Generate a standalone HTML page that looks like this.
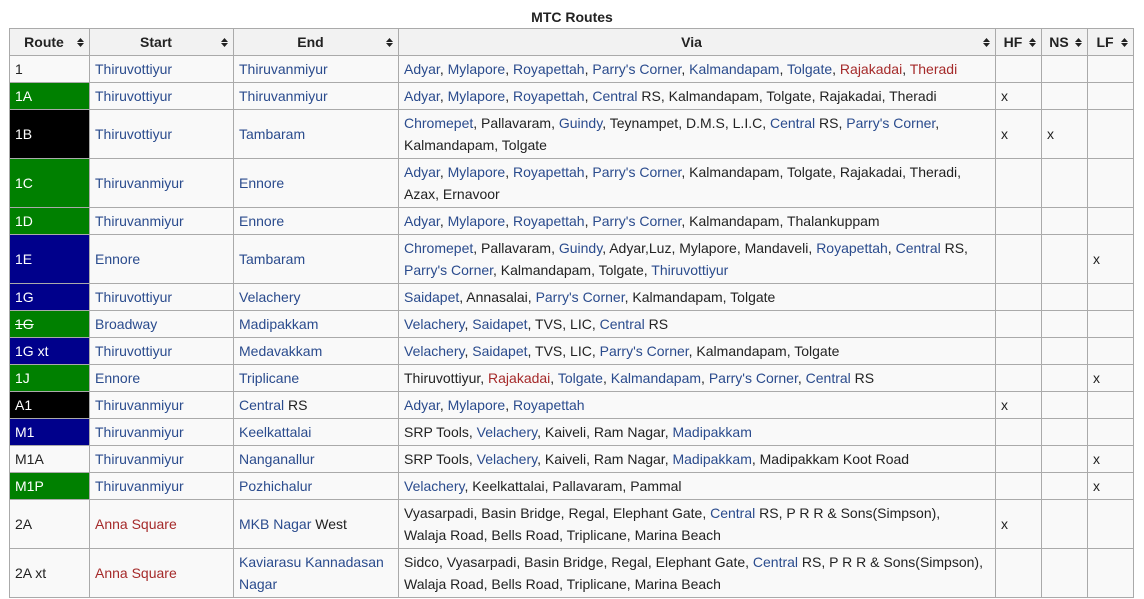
<!DOCTYPE html>
<html><head><meta charset="utf-8"><style>
body{margin:0;background:#fff;font-family:"Liberation Sans",Arial,sans-serif;font-size:14px;color:#222}
.cap{position:absolute;left:0;width:1144px;top:8px;text-align:center;font-weight:bold;font-size:14px;line-height:18px}
table{position:absolute;left:9px;top:28px;border-collapse:collapse;table-layout:fixed;width:1124px;background:#f9f9f9}
td,th{border:1px solid #aaa;padding:0 5px;line-height:22px;vertical-align:middle;overflow:hidden;white-space:nowrap}
th{background:#f2f2f2;height:26px;font-weight:bold;text-align:center;position:relative;padding-right:16px}
th i{position:absolute;right:5px;top:9px;width:7px;height:9px;display:block}
th i svg{display:block}
td{height:26px}
tr.d td{height:48px}
a{color:#2a4b8d;text-decoration:none}
.r{color:#a52a2a}
.g{background:#008000;color:#fff}.b{background:#000;color:#fff}.n{background:#00008b;color:#fff}
</style></head><body>
<div class="cap">MTC Routes</div>
<table>
<colgroup><col style="width:80px"><col style="width:144px"><col style="width:165px"><col style="width:597px"><col style="width:46px"><col style="width:46px"><col style="width:46px"></colgroup>
<tr><th>Route<i><svg width="7" height="9"><path d="M0 4L3.5 0L7 4ZM0 5L3.5 9L7 5Z" fill="#222"/></svg></i></th><th>Start<i><svg width="7" height="9"><path d="M0 4L3.5 0L7 4ZM0 5L3.5 9L7 5Z" fill="#222"/></svg></i></th><th>End<i><svg width="7" height="9"><path d="M0 4L3.5 0L7 4ZM0 5L3.5 9L7 5Z" fill="#222"/></svg></i></th><th>Via<i><svg width="7" height="9"><path d="M0 4L3.5 0L7 4ZM0 5L3.5 9L7 5Z" fill="#222"/></svg></i></th><th>HF<i><svg width="7" height="9"><path d="M0 4L3.5 0L7 4ZM0 5L3.5 9L7 5Z" fill="#222"/></svg></i></th><th>NS<i><svg width="7" height="9"><path d="M0 4L3.5 0L7 4ZM0 5L3.5 9L7 5Z" fill="#222"/></svg></i></th><th>LF<i><svg width="7" height="9"><path d="M0 4L3.5 0L7 4ZM0 5L3.5 9L7 5Z" fill="#222"/></svg></i></th></tr>
<tr><td>1</td><td><a>Thiruvottiyur</a></td><td><a>Thiruvanmiyur</a></td><td><a>Adyar</a>, <a>Mylapore</a>, <a>Royapettah</a>, <a>Parry's Corner</a>, <a>Kalmandapam</a>, <a>Tolgate</a>, <span class="r">Rajakadai</span>, <span class="r">Theradi</span></td><td></td><td></td><td></td></tr>
<tr><td class="g">1A</td><td><a>Thiruvottiyur</a></td><td><a>Thiruvanmiyur</a></td><td><a>Adyar</a>, <a>Mylapore</a>, <a>Royapettah</a>, <a>Central</a> RS, Kalmandapam, Tolgate, Rajakadai, Theradi</td><td>x</td><td></td><td></td></tr>
<tr class="d"><td class="b">1B</td><td><a>Thiruvottiyur</a></td><td><a>Tambaram</a></td><td><a>Chromepet</a>, Pallavaram, <a>Guindy</a>, Teynampet, D.M.S, L.I.C, <a>Central</a> RS, <a>Parry's Corner</a>,<br>Kalmandapam, Tolgate</td><td>x</td><td>x</td><td></td></tr>
<tr class="d"><td class="g">1C</td><td><a>Thiruvanmiyur</a></td><td><a>Ennore</a></td><td><a>Adyar</a>, <a>Mylapore</a>, <a>Royapettah</a>, <a>Parry's Corner</a>, Kalmandapam, Tolgate, Rajakadai, Theradi,<br>Azax, Ernavoor</td><td></td><td></td><td></td></tr>
<tr><td class="g">1D</td><td><a>Thiruvanmiyur</a></td><td><a>Ennore</a></td><td><a>Adyar</a>, <a>Mylapore</a>, <a>Royapettah</a>, <a>Parry's Corner</a>, Kalmandapam, Thalankuppam</td><td></td><td></td><td></td></tr>
<tr class="d"><td class="n">1E</td><td><a>Ennore</a></td><td><a>Tambaram</a></td><td><a>Chromepet</a>, Pallavaram, <a>Guindy</a>, Adyar,Luz, Mylapore, Mandaveli, <a>Royapettah</a>, <a>Central</a> RS,<br><a>Parry's Corner</a>, Kalmandapam, Tolgate, <a>Thiruvottiyur</a></td><td></td><td></td><td>x</td></tr>
<tr><td class="n">1G</td><td><a>Thiruvottiyur</a></td><td><a>Velachery</a></td><td><a>Saidapet</a>, Annasalai, <a>Parry's Corner</a>, Kalmandapam, Tolgate</td><td></td><td></td><td></td></tr>
<tr><td class="g"><s>1G</s></td><td><a>Broadway</a></td><td><a>Madipakkam</a></td><td><a>Velachery</a>, <a>Saidapet</a>, TVS, LIC, <a>Central</a> RS</td><td></td><td></td><td></td></tr>
<tr><td class="n">1G xt</td><td><a>Thiruvottiyur</a></td><td><a>Medavakkam</a></td><td><a>Velachery</a>, <a>Saidapet</a>, TVS, LIC, <a>Parry's Corner</a>, Kalmandapam, Tolgate</td><td></td><td></td><td></td></tr>
<tr><td class="g">1J</td><td><a>Ennore</a></td><td><a>Triplicane</a></td><td>Thiruvottiyur, <span class="r">Rajakadai</span>, <a>Tolgate</a>, <a>Kalmandapam</a>, <a>Parry's Corner</a>, <a>Central</a> RS</td><td></td><td></td><td>x</td></tr>
<tr><td class="b">A1</td><td><a>Thiruvanmiyur</a></td><td><a>Central</a> RS</td><td><a>Adyar</a>, <a>Mylapore</a>, <a>Royapettah</a></td><td>x</td><td></td><td></td></tr>
<tr><td class="n">M1</td><td><a>Thiruvanmiyur</a></td><td><a>Keelkattalai</a></td><td>SRP Tools, <a>Velachery</a>, Kaiveli, Ram Nagar, <a>Madipakkam</a></td><td></td><td></td><td></td></tr>
<tr><td>M1A</td><td><a>Thiruvanmiyur</a></td><td><a>Nanganallur</a></td><td>SRP Tools, <a>Velachery</a>, Kaiveli, Ram Nagar, <a>Madipakkam</a>, Madipakkam Koot Road</td><td></td><td></td><td>x</td></tr>
<tr><td class="g">M1P</td><td><a>Thiruvanmiyur</a></td><td><a>Pozhichalur</a></td><td><a>Velachery</a>, Keelkattalai, Pallavaram, Pammal</td><td></td><td></td><td>x</td></tr>
<tr class="d"><td>2A</td><td><span class="r">Anna Square</span></td><td><a>MKB Nagar</a> West</td><td>Vyasarpadi, Basin Bridge, Regal, Elephant Gate, <a>Central</a> RS, P R R &amp; Sons(Simpson),<br>Walaja Road, Bells Road, Triplicane, Marina Beach</td><td>x</td><td></td><td></td></tr>
<tr class="d"><td>2A xt</td><td><span class="r">Anna Square</span></td><td><a>Kaviarasu Kannadasan</a><br><a>Nagar</a></td><td>Sidco, Vyasarpadi, Basin Bridge, Regal, Elephant Gate, <a>Central</a> RS, P R R &amp; Sons(Simpson),<br>Walaja Road, Bells Road, Triplicane, Marina Beach</td><td></td><td></td><td></td></tr>
</table>
</body></html>
